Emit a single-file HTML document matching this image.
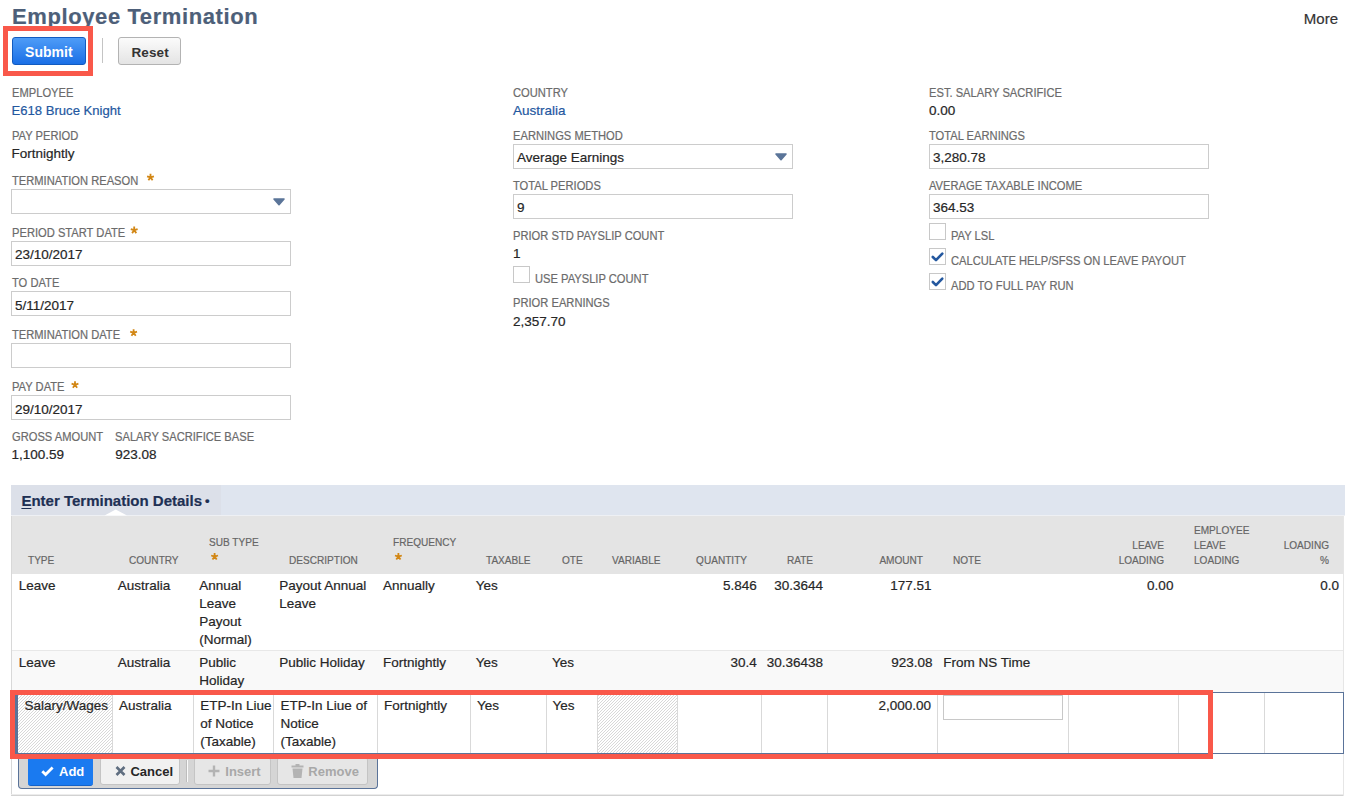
<!DOCTYPE html>
<html><head><meta charset="utf-8"><style>
html,body{margin:0;padding:0;background:#fff;width:1345px;height:803px;overflow:hidden;position:relative;font-family:"Liberation Sans",sans-serif;}
.t{position:absolute;white-space:nowrap;-webkit-text-stroke:0.2px currentColor;}
.b{position:absolute;box-sizing:content-box;}
.btn-blue{background:linear-gradient(#4e9cf7,#1a6fe6);border:1px solid #125bc0;border-radius:3px;}
.btn-grey{background:linear-gradient(#fbfbfb,#e4e4e4);border:1px solid #b3b3b3;border-radius:3px;}
.btn-dis{background:#e6e6e6;border:1px solid #cfcfcf;}
.hatch{background:repeating-linear-gradient(135deg,#fff 0,#fff 2px,#dedede 2px,#dedede 3px);}
</style></head><body>
<div class="t" style="left:12px;top:2.58px;font-size:22px;line-height:28.6px;color:#4d5f79;font-weight:bold;letter-spacing:0.6px;">Employee Termination</div>
<div class="t" style="left:738px;width:600px;text-align:right;top:8.85px;font-size:15px;line-height:19.5px;color:#333;">More</div>
<div class="b" style="left:3px;top:26px;width:80px;height:40px;border:5px solid #f9584a;"></div>
<div class="b btn-blue" style="left:12px;top:37px;width:72px;height:26px;"></div>
<div class="t" style="left:25px;top:43.05px;font-size:14px;line-height:18.2px;color:#fff;font-weight:bold;-webkit-text-stroke:0;letter-spacing:0.05px;">Submit</div>
<div class="b" style="left:102px;top:38px;width:1px;height:25px;background:#c4c4c4;"></div>
<div class="b btn-grey" style="left:118px;top:37px;width:61px;height:26px;"></div>
<div class="t" style="left:131.5px;top:44.05px;font-size:13.5px;line-height:17.55px;color:#333;font-weight:bold;-webkit-text-stroke:0;letter-spacing:0.1px;">Reset</div>
<div class="t" style="left:11.5px;top:85.94px;font-size:12px;line-height:15.6px;color:#6b6b6b;transform:scaleX(0.93);transform-origin:left top;">EMPLOYEE</div>
<div class="t" style="left:11.5px;top:102.25px;font-size:13.1px;line-height:17.03px;color:#24589f;">E618 Bruce Knight</div>
<div class="t" style="left:11.5px;top:128.94px;font-size:12px;line-height:15.6px;color:#6b6b6b;transform:scaleX(0.93);transform-origin:left top;">PAY PERIOD</div>
<div class="t" style="left:11.5px;top:145.35px;font-size:13.5px;line-height:17.55px;color:#262626;">Fortnightly</div>
<div class="t" style="left:11.5px;top:173.54px;font-size:12px;line-height:15.6px;color:#6b6b6b;transform:scaleX(0.93);transform-origin:left top;">TERMINATION REASON</div>
<svg class="b" style="left:0;top:0;overflow:visible" width="1" height="1"><path d="M150.50 177.40 L150.50 173.80 M150.50 177.40 L153.92 176.29 M150.50 177.40 L152.62 180.31 M150.50 177.40 L148.38 180.31 M150.50 177.40 L147.08 176.29 " stroke="#d28715" stroke-width="1.8" stroke-linecap="butt" fill="none"/></svg>
<div class="b" style="left:11px;top:189px;width:278px;height:23px;border:1px solid #ccc;background:#fff;"></div>
<svg class="b" style="left:272px;top:197px" width="14" height="9" viewBox="0 0 14 9"><path d="M2 2 L12 2 L7 7.6 Z" fill="#5b7599" stroke="#5b7599" stroke-width="1.6" stroke-linejoin="round"/></svg>
<div class="t" style="left:11.5px;top:226.04px;font-size:12px;line-height:15.6px;color:#6b6b6b;transform:scaleX(0.93);transform-origin:left top;">PERIOD START DATE</div>
<svg class="b" style="left:0;top:0;overflow:visible" width="1" height="1"><path d="M134.20 230.20 L134.20 226.60 M134.20 230.20 L137.62 229.09 M134.20 230.20 L136.32 233.11 M134.20 230.20 L132.08 233.11 M134.20 230.20 L130.78 229.09 " stroke="#d28715" stroke-width="1.8" stroke-linecap="butt" fill="none"/></svg>
<div class="b" style="left:11px;top:241px;width:278px;height:23px;border:1px solid #ccc;background:#fff;"></div>
<div class="t" style="left:15px;top:246.25px;font-size:13.5px;line-height:17.55px;color:#262626;">23/10/2017</div>
<div class="t" style="left:11.5px;top:275.84px;font-size:12px;line-height:15.6px;color:#6b6b6b;transform:scaleX(0.93);transform-origin:left top;">TO DATE</div>
<div class="b" style="left:11px;top:291px;width:278px;height:23px;border:1px solid #ccc;background:#fff;"></div>
<div class="t" style="left:15px;top:296.65px;font-size:13.5px;line-height:17.55px;color:#262626;">5/11/2017</div>
<div class="t" style="left:11.5px;top:327.84px;font-size:12px;line-height:15.6px;color:#6b6b6b;transform:scaleX(0.93);transform-origin:left top;">TERMINATION DATE</div>
<svg class="b" style="left:0;top:0;overflow:visible" width="1" height="1"><path d="M133.60 332.80 L133.60 329.20 M133.60 332.80 L137.02 331.69 M133.60 332.80 L135.72 335.71 M133.60 332.80 L131.48 335.71 M133.60 332.80 L130.18 331.69 " stroke="#d28715" stroke-width="1.8" stroke-linecap="butt" fill="none"/></svg>
<div class="b" style="left:11px;top:343px;width:278px;height:23px;border:1px solid #ccc;background:#fff;"></div>
<div class="t" style="left:11.5px;top:379.54px;font-size:12px;line-height:15.6px;color:#6b6b6b;transform:scaleX(0.93);transform-origin:left top;">PAY DATE</div>
<svg class="b" style="left:0;top:0;overflow:visible" width="1" height="1"><path d="M75.00 384.80 L75.00 381.20 M75.00 384.80 L78.42 383.69 M75.00 384.80 L77.12 387.71 M75.00 384.80 L72.88 387.71 M75.00 384.80 L71.58 383.69 " stroke="#d28715" stroke-width="1.8" stroke-linecap="butt" fill="none"/></svg>
<div class="b" style="left:11px;top:395px;width:278px;height:23px;border:1px solid #ccc;background:#fff;"></div>
<div class="t" style="left:15px;top:400.65px;font-size:13.5px;line-height:17.55px;color:#262626;">29/10/2017</div>
<div class="t" style="left:11.5px;top:429.94px;font-size:12px;line-height:15.6px;color:#6b6b6b;transform:scaleX(0.93);transform-origin:left top;">GROSS AMOUNT</div>
<div class="t" style="left:11.5px;top:446.35px;font-size:13.5px;line-height:17.55px;color:#262626;">1,100.59</div>
<div class="t" style="left:115.2px;top:429.94px;font-size:12px;line-height:15.6px;color:#6b6b6b;transform:scaleX(0.93);transform-origin:left top;">SALARY SACRIFICE BASE</div>
<div class="t" style="left:115.2px;top:446.35px;font-size:13.5px;line-height:17.55px;color:#262626;">923.08</div>
<div class="t" style="left:513px;top:85.84px;font-size:12px;line-height:15.6px;color:#6b6b6b;transform:scaleX(0.93);transform-origin:left top;">COUNTRY</div>
<div class="t" style="left:513px;top:102.05px;font-size:13.5px;line-height:17.55px;color:#24589f;">Australia</div>
<div class="t" style="left:513px;top:128.54px;font-size:12px;line-height:15.6px;color:#6b6b6b;transform:scaleX(0.93);transform-origin:left top;">EARNINGS METHOD</div>
<div class="b" style="left:513px;top:144px;width:278px;height:23px;border:1px solid #ccc;background:#fff;"></div>
<div class="t" style="left:517px;top:148.85px;font-size:13.5px;line-height:17.55px;color:#262626;">Average Earnings</div>
<svg class="b" style="left:774px;top:152px" width="14" height="9" viewBox="0 0 14 9"><path d="M2 2 L12 2 L7 7.6 Z" fill="#5b7599" stroke="#5b7599" stroke-width="1.6" stroke-linejoin="round"/></svg>
<div class="t" style="left:513px;top:178.64px;font-size:12px;line-height:15.6px;color:#6b6b6b;transform:scaleX(0.93);transform-origin:left top;">TOTAL PERIODS</div>
<div class="b" style="left:513px;top:194px;width:278px;height:23px;border:1px solid #ccc;background:#fff;"></div>
<div class="t" style="left:517px;top:198.65px;font-size:13.5px;line-height:17.55px;color:#262626;">9</div>
<div class="t" style="left:513px;top:228.84px;font-size:12px;line-height:15.6px;color:#6b6b6b;transform:scaleX(0.93);transform-origin:left top;">PRIOR STD PAYSLIP COUNT</div>
<div class="t" style="left:513px;top:245.05px;font-size:13.5px;line-height:17.55px;color:#262626;">1</div>
<div class="b" style="left:513px;top:266px;width:15px;height:15px;border:1px solid #c8c8c8;background:#fff;"></div>
<div class="t" style="left:535.4px;top:271.84px;font-size:12px;line-height:15.6px;color:#6b6b6b;transform:scaleX(0.93);transform-origin:left top;">USE PAYSLIP COUNT</div>
<div class="t" style="left:513px;top:296.04px;font-size:12px;line-height:15.6px;color:#6b6b6b;transform:scaleX(0.93);transform-origin:left top;">PRIOR EARNINGS</div>
<div class="t" style="left:513px;top:312.95px;font-size:13.5px;line-height:17.55px;color:#262626;">2,357.70</div>
<div class="t" style="left:929px;top:85.94px;font-size:12px;line-height:15.6px;color:#6b6b6b;transform:scaleX(0.93);transform-origin:left top;">EST. SALARY SACRIFICE</div>
<div class="t" style="left:929px;top:101.65px;font-size:13.5px;line-height:17.55px;color:#262626;">0.00</div>
<div class="t" style="left:929px;top:128.94px;font-size:12px;line-height:15.6px;color:#6b6b6b;transform:scaleX(0.93);transform-origin:left top;">TOTAL EARNINGS</div>
<div class="b" style="left:929px;top:144px;width:278px;height:23px;border:1px solid #ccc;background:#fff;"></div>
<div class="t" style="left:933px;top:148.75px;font-size:13.5px;line-height:17.55px;color:#262626;">3,280.78</div>
<div class="t" style="left:929px;top:178.94px;font-size:12px;line-height:15.6px;color:#6b6b6b;transform:scaleX(0.93);transform-origin:left top;">AVERAGE TAXABLE INCOME</div>
<div class="b" style="left:929px;top:194px;width:278px;height:23px;border:1px solid #ccc;background:#fff;"></div>
<div class="t" style="left:933px;top:198.85px;font-size:13.5px;line-height:17.55px;color:#262626;">364.53</div>
<svg class="b" style="left:929px;top:223px" width="17" height="17" viewBox="0 0 17 17"><rect x="0.5" y="0.5" width="16" height="16" fill="#fff" stroke="#c8c8c8"/></svg>
<div class="t" style="left:951px;top:228.74px;font-size:12px;line-height:15.6px;color:#6b6b6b;transform:scaleX(0.93);transform-origin:left top;">PAY LSL</div>
<svg class="b" style="left:929px;top:248px" width="17" height="17" viewBox="0 0 17 17"><rect x="0.5" y="0.5" width="16" height="16" fill="#fff" stroke="#c8c8c8"/><path d="M3.8 9 L7 12.2 L13.3 5.6" fill="none" stroke="#24589f" stroke-width="2.6" stroke-linecap="round" stroke-linejoin="round"/></svg>
<div class="t" style="left:951px;top:253.74px;font-size:12px;line-height:15.6px;color:#6b6b6b;transform:scaleX(0.93);transform-origin:left top;">CALCULATE HELP/SFSS ON LEAVE PAYOUT</div>
<svg class="b" style="left:929px;top:273px" width="17" height="17" viewBox="0 0 17 17"><rect x="0.5" y="0.5" width="16" height="16" fill="#fff" stroke="#c8c8c8"/><path d="M3.8 9 L7 12.2 L13.3 5.6" fill="none" stroke="#24589f" stroke-width="2.6" stroke-linecap="round" stroke-linejoin="round"/></svg>
<div class="t" style="left:951px;top:278.64px;font-size:12px;line-height:15.6px;color:#6b6b6b;transform:scaleX(0.93);transform-origin:left top;">ADD TO FULL PAY RUN</div>
<div class="b" style="left:11px;top:485px;width:1334px;height:30px;background:#dfe5ef;"></div>
<div class="b" style="left:11px;top:485px;width:210px;height:30px;background:#dce0e9;"></div>
<div class="t" style="left:21.4px;top:491.05px;font-size:15px;line-height:19.5px;color:#1e3054;font-weight:bold;"><u style="text-decoration-thickness:1px;text-underline-offset:2px">E</u>nter Termination Details<span style="font-size:13px;position:relative;top:-1px;margin-left:3px">•</span></div>
<div class="b" style="left:11px;top:515px;width:1334px;height:1px;background:#eef0f4;"></div>
<div class="b" style="left:12px;top:516px;width:1332px;height:58px;background:#e4e4e4;"></div>
<svg class="b" style="left:104px;top:509px" width="24" height="7" viewBox="0 0 24 7"><path d="M0.5 6.5 L11.7 0.6 L23 6.5 Z" fill="#ffffff"/></svg>
<div class="b" style="left:11px;top:516px;width:1px;height:280px;background:#d8d8d8;"></div>
<div class="b" style="left:11px;top:794px;width:1333px;height:1px;background:#ececec;"></div>
<div class="b" style="left:11px;top:795px;width:1333px;height:1px;background:#d2d2d2;"></div>
<div class="b" style="left:1343px;top:516px;width:1px;height:280px;background:#e6e6e6;"></div>
<div class="t" style="left:28px;top:553.04px;font-size:11px;line-height:14.3px;color:#666;transform:scaleX(0.915);transform-origin:left top;">TYPE</div>
<div class="t" style="left:128.5px;top:553.04px;font-size:11px;line-height:14.3px;color:#666;transform:scaleX(0.915);transform-origin:left top;">COUNTRY</div>
<div class="t" style="left:209px;top:535.04px;font-size:11px;line-height:14.3px;color:#666;transform:scaleX(0.915);transform-origin:left top;">SUB TYPE</div>
<svg class="b" style="left:0;top:0;overflow:visible" width="1" height="1"><path d="M214.60 556.60 L214.60 553.00 M214.60 556.60 L218.02 555.49 M214.60 556.60 L216.72 559.51 M214.60 556.60 L212.48 559.51 M214.60 556.60 L211.18 555.49 " stroke="#d28715" stroke-width="1.8" stroke-linecap="butt" fill="none"/></svg>
<div class="t" style="left:289.4px;top:553.04px;font-size:11px;line-height:14.3px;color:#666;transform:scaleX(0.915);transform-origin:left top;">DESCRIPTION</div>
<div class="t" style="left:393px;top:535.04px;font-size:11px;line-height:14.3px;color:#666;transform:scaleX(0.915);transform-origin:left top;">FREQUENCY</div>
<svg class="b" style="left:0;top:0;overflow:visible" width="1" height="1"><path d="M398.40 556.60 L398.40 553.00 M398.40 556.60 L401.82 555.49 M398.40 556.60 L400.52 559.51 M398.40 556.60 L396.28 559.51 M398.40 556.60 L394.98 555.49 " stroke="#d28715" stroke-width="1.8" stroke-linecap="butt" fill="none"/></svg>
<div class="t" style="left:486px;top:553.04px;font-size:11px;line-height:14.3px;color:#666;transform:scaleX(0.915);transform-origin:left top;">TAXABLE</div>
<div class="t" style="left:562px;top:553.04px;font-size:11px;line-height:14.3px;color:#666;transform:scaleX(0.915);transform-origin:left top;">OTE</div>
<div class="t" style="left:612.2px;top:553.04px;font-size:11px;line-height:14.3px;color:#666;transform:scaleX(0.915);transform-origin:left top;">VARIABLE</div>
<div class="t" style="left:146.60000000000002px;width:600px;text-align:right;top:553.04px;font-size:11px;line-height:14.3px;color:#666;transform:scaleX(0.915);transform-origin:right top;">QUANTITY</div>
<div class="t" style="left:212.79999999999995px;width:600px;text-align:right;top:553.04px;font-size:11px;line-height:14.3px;color:#666;transform:scaleX(0.915);transform-origin:right top;">RATE</div>
<div class="t" style="left:322.79999999999995px;width:600px;text-align:right;top:553.04px;font-size:11px;line-height:14.3px;color:#666;transform:scaleX(0.915);transform-origin:right top;">AMOUNT</div>
<div class="t" style="left:953.4px;top:553.04px;font-size:11px;line-height:14.3px;color:#666;transform:scaleX(0.915);transform-origin:left top;">NOTE</div>
<div class="t" style="left:564px;width:600px;text-align:right;top:538.24px;font-size:11px;line-height:14.3px;color:#666;transform:scaleX(0.915);transform-origin:right top;">LEAVE</div>
<div class="t" style="left:564px;width:600px;text-align:right;top:553.04px;font-size:11px;line-height:14.3px;color:#666;transform:scaleX(0.915);transform-origin:right top;">LOADING</div>
<div class="t" style="left:1194.3px;top:523.44px;font-size:11px;line-height:14.3px;color:#666;transform:scaleX(0.915);transform-origin:left top;">EMPLOYEE</div>
<div class="t" style="left:1194.3px;top:538.24px;font-size:11px;line-height:14.3px;color:#666;transform:scaleX(0.915);transform-origin:left top;">LEAVE</div>
<div class="t" style="left:1194.3px;top:553.04px;font-size:11px;line-height:14.3px;color:#666;transform:scaleX(0.915);transform-origin:left top;">LOADING</div>
<div class="t" style="left:728.7px;width:600px;text-align:right;top:538.24px;font-size:11px;line-height:14.3px;color:#666;transform:scaleX(0.915);transform-origin:right top;">LOADING</div>
<div class="t" style="left:728.7px;width:600px;text-align:right;top:553.04px;font-size:11px;line-height:14.3px;color:#666;transform:scaleX(0.915);transform-origin:right top;">%</div>
<div class="b" style="left:12px;top:650px;width:1331px;height:1px;background:#e8e8e8;"></div>
<div class="b" style="left:12px;top:651px;width:1331px;height:41px;background:#f9f9f9;"></div>
<div class="t" style="left:18.7px;top:576.72px;font-size:13.5px;line-height:18px;color:#262626;">Leave</div>
<div class="t" style="left:117.8px;top:576.72px;font-size:13.5px;line-height:18px;color:#262626;">Australia</div>
<div class="t" style="left:199.3px;top:576.72px;font-size:13.5px;line-height:18px;color:#262626;">Annual</div>
<div class="t" style="left:199.3px;top:594.72px;font-size:13.5px;line-height:18px;color:#262626;">Leave</div>
<div class="t" style="left:199.3px;top:612.72px;font-size:13.5px;line-height:18px;color:#262626;">Payout</div>
<div class="t" style="left:199.3px;top:630.72px;font-size:13.5px;line-height:18px;color:#262626;">(Normal)</div>
<div class="t" style="left:279.3px;top:576.72px;font-size:13.5px;line-height:18px;color:#262626;">Payout Annual</div>
<div class="t" style="left:279.3px;top:594.72px;font-size:13.5px;line-height:18px;color:#262626;">Leave</div>
<div class="t" style="left:383px;top:576.72px;font-size:13.5px;line-height:18px;color:#262626;">Annually</div>
<div class="t" style="left:475.7px;top:576.72px;font-size:13.5px;line-height:18px;color:#262626;">Yes</div>
<div class="t" style="left:156.79999999999995px;width:600px;text-align:right;top:576.72px;font-size:13.5px;line-height:18px;color:#262626;">5.846</div>
<div class="t" style="left:223px;width:600px;text-align:right;top:576.72px;font-size:13.5px;line-height:18px;color:#262626;">30.3644</div>
<div class="t" style="left:331.5px;width:600px;text-align:right;top:576.72px;font-size:13.5px;line-height:18px;color:#262626;">177.51</div>
<div class="t" style="left:573.4000000000001px;width:600px;text-align:right;top:576.72px;font-size:13.5px;line-height:18px;color:#262626;">0.00</div>
<div class="t" style="left:739px;width:600px;text-align:right;top:576.72px;font-size:13.5px;line-height:18px;color:#262626;">0.0</div>
<div class="t" style="left:18.7px;top:653.62px;font-size:13.5px;line-height:18px;color:#262626;">Leave</div>
<div class="t" style="left:117.8px;top:653.62px;font-size:13.5px;line-height:18px;color:#262626;">Australia</div>
<div class="t" style="left:199.3px;top:653.62px;font-size:13.5px;line-height:18px;color:#262626;">Public</div>
<div class="t" style="left:199.3px;top:671.62px;font-size:13.5px;line-height:18px;color:#262626;">Holiday</div>
<div class="t" style="left:279.3px;top:653.62px;font-size:13.5px;line-height:18px;color:#262626;">Public Holiday</div>
<div class="t" style="left:383px;top:653.62px;font-size:13.5px;line-height:18px;color:#262626;">Fortnightly</div>
<div class="t" style="left:475.7px;top:653.62px;font-size:13.5px;line-height:18px;color:#262626;">Yes</div>
<div class="t" style="left:551.9px;top:653.62px;font-size:13.5px;line-height:18px;color:#262626;">Yes</div>
<div class="t" style="left:156.79999999999995px;width:600px;text-align:right;top:653.62px;font-size:13.5px;line-height:18px;color:#262626;">30.4</div>
<div class="t" style="left:223px;width:600px;text-align:right;top:653.62px;font-size:13.5px;line-height:18px;color:#262626;">30.36438</div>
<div class="t" style="left:332.5px;width:600px;text-align:right;top:653.62px;font-size:13.5px;line-height:18px;color:#262626;">923.08</div>
<div class="t" style="left:943.2px;top:653.62px;font-size:13.5px;line-height:18px;color:#262626;">From NS Time</div>
<div class="b" style="left:12px;top:692px;width:1331px;height:61px;background:#fff;"></div>
<div class="b" style="left:12px;top:692px;width:1332px;height:1px;background:#5a7399;"></div>
<div class="b" style="left:12px;top:753px;width:1332px;height:1px;background:#5a7399;"></div>
<div class="b" style="left:1343px;top:692px;width:1px;height:62px;background:#5a7399;"></div>
<div class="b" style="left:15px;top:693px;width:3px;height:60px;background:#5a7399;"></div>
<svg class="b" style="left:18px;top:693px" width="94" height="60"><defs><pattern id="hp1" width="3" height="3" patternUnits="userSpaceOnUse"><rect x="0" y="2" width="1" height="1" fill="#d8d8d8"/><rect x="1" y="1" width="1" height="1" fill="#d8d8d8"/><rect x="2" y="0" width="1" height="1" fill="#d8d8d8"/></pattern></defs><rect width="100%" height="100%" fill="#fff"/><rect width="100%" height="100%" fill="url(#hp1)"/></svg>
<svg class="b" style="left:598px;top:693px" width="80" height="60"><defs><pattern id="hp2" width="3" height="3" patternUnits="userSpaceOnUse"><rect x="0" y="2" width="1" height="1" fill="#d8d8d8"/><rect x="1" y="1" width="1" height="1" fill="#d8d8d8"/><rect x="2" y="0" width="1" height="1" fill="#d8d8d8"/></pattern></defs><rect width="100%" height="100%" fill="#fff"/><rect width="100%" height="100%" fill="url(#hp2)"/></svg>
<div class="b" style="left:112px;top:693px;width:1px;height:60px;background:#d9d9d9;"></div>
<div class="b" style="left:193px;top:693px;width:1px;height:60px;background:#d9d9d9;"></div>
<div class="b" style="left:273px;top:693px;width:1px;height:60px;background:#d9d9d9;"></div>
<div class="b" style="left:377px;top:693px;width:1px;height:60px;background:#d9d9d9;"></div>
<div class="b" style="left:470px;top:693px;width:1px;height:60px;background:#d9d9d9;"></div>
<div class="b" style="left:546px;top:693px;width:1px;height:60px;background:#d9d9d9;"></div>
<div class="b" style="left:597px;top:693px;width:1px;height:60px;background:#d9d9d9;"></div>
<div class="b" style="left:677px;top:693px;width:1px;height:60px;background:#d9d9d9;"></div>
<div class="b" style="left:761px;top:693px;width:1px;height:60px;background:#d9d9d9;"></div>
<div class="b" style="left:827px;top:693px;width:1px;height:60px;background:#d9d9d9;"></div>
<div class="b" style="left:937px;top:693px;width:1px;height:60px;background:#d9d9d9;"></div>
<div class="b" style="left:1068px;top:693px;width:1px;height:60px;background:#d9d9d9;"></div>
<div class="b" style="left:1178px;top:693px;width:1px;height:60px;background:#d9d9d9;"></div>
<div class="b" style="left:1264px;top:693px;width:1px;height:60px;background:#d9d9d9;"></div>
<div class="t" style="left:24.4px;top:696.52px;font-size:13.5px;line-height:18px;color:#262626;">Salary/Wages</div>
<div class="t" style="left:119px;top:696.52px;font-size:13.5px;line-height:18px;color:#262626;">Australia</div>
<div class="t" style="left:200.2px;top:696.52px;font-size:13.5px;line-height:18px;color:#262626;">ETP-In Liue</div>
<div class="t" style="left:200.2px;top:714.52px;font-size:13.5px;line-height:18px;color:#262626;">of Notice</div>
<div class="t" style="left:200.2px;top:732.52px;font-size:13.5px;line-height:18px;color:#262626;">(Taxable)</div>
<div class="t" style="left:280.6px;top:696.52px;font-size:13.5px;line-height:18px;color:#262626;">ETP-In Liue of</div>
<div class="t" style="left:280.6px;top:714.52px;font-size:13.5px;line-height:18px;color:#262626;">Notice</div>
<div class="t" style="left:280.6px;top:732.52px;font-size:13.5px;line-height:18px;color:#262626;">(Taxable)</div>
<div class="t" style="left:384px;top:696.52px;font-size:13.5px;line-height:18px;color:#262626;">Fortnightly</div>
<div class="t" style="left:476.9px;top:696.52px;font-size:13.5px;line-height:18px;color:#262626;">Yes</div>
<div class="t" style="left:552.5px;top:696.52px;font-size:13.5px;line-height:18px;color:#262626;">Yes</div>
<div class="t" style="left:331px;width:600px;text-align:right;top:696.52px;font-size:13.5px;line-height:18px;color:#262626;">2,000.00</div>
<div class="b" style="left:943px;top:695px;width:118px;height:23px;border:1px solid #c8c8c8;background:#fff;"></div>
<div class="b" style="left:18px;top:754px;width:358px;height:34px;background:#d5d5d5;border:1px solid #5a7399;border-top:none;border-radius:0 0 4px 4px;"></div>
<div class="b" style="left:28px;top:757px;width:65px;height:28px;background:#1a7af0;border-bottom:1px solid #1462c8;border-radius:3px"></div>
<svg class="b" style="left:40px;top:765px" width="15" height="12" viewBox="0 0 15 12"><path d="M2.3 6.3 L5.6 9.6 L12.6 2.6" fill="none" stroke="#fff" stroke-width="2.8" stroke-linecap="butt" stroke-linejoin="miter"/></svg>
<div class="t" style="left:59px;top:764.05px;font-size:13px;line-height:16.9px;color:#fff;font-weight:bold;-webkit-text-stroke:0;">Add</div>
<div class="b" style="left:100px;top:757px;width:78px;height:26px;background:#f1f1f1;border:1px solid #c4c4c4;border-radius:3px"></div>
<svg class="b" style="left:115px;top:766px" width="11" height="10" viewBox="0 0 11 10"><path d="M1.5 1 L9.5 9 M9.5 1 L1.5 9" fill="none" stroke="#5f6e80" stroke-width="2.6"/></svg>
<div class="t" style="left:130.4px;top:764.05px;font-size:13px;line-height:16.9px;color:#262626;font-weight:bold;-webkit-text-stroke:0;">Cancel</div>
<div class="b" style="left:186px;top:760px;width:1px;height:22px;background:#bdbdbd;"></div>
<div class="b" style="left:187px;top:760px;width:1px;height:22px;background:#fafafa;"></div>
<div class="b" style="left:194px;top:757px;width:75px;height:26px;background:#e6e6e6;border:1px solid #c4c4c4;border-radius:3px"></div>
<svg class="b" style="left:208px;top:765px" width="12" height="12" viewBox="0 0 12 12"><path d="M6 0.5 L6 11.5 M0.5 6 L11.5 6" fill="none" stroke="#b3b3b3" stroke-width="2.4"/></svg>
<div class="t" style="left:225.3px;top:764.05px;font-size:13px;line-height:16.9px;color:#a8a8a8;font-weight:bold;-webkit-text-stroke:0;">Insert</div>
<div class="b" style="left:277px;top:757px;width:89px;height:26px;background:#e6e6e6;border:1px solid #c4c4c4;border-radius:3px"></div>
<svg class="b" style="left:291px;top:764px" width="13" height="14" viewBox="0 0 13 14"><rect x="0.5" y="1.5" width="12" height="2" fill="#b3b3b3"/><rect x="4.5" y="0" width="4" height="2" fill="#b3b3b3"/><path d="M1.5 4.5 L11.5 4.5 L10.5 14 L2.5 14 Z" fill="#b3b3b3"/></svg>
<div class="t" style="left:308.3px;top:764.05px;font-size:13px;line-height:16.9px;color:#a8a8a8;font-weight:bold;-webkit-text-stroke:0;">Remove</div>
<div class="b" style="left:10px;top:690px;width:1193px;height:59px;border:5px solid #f9584a;"></div>
</body></html>
